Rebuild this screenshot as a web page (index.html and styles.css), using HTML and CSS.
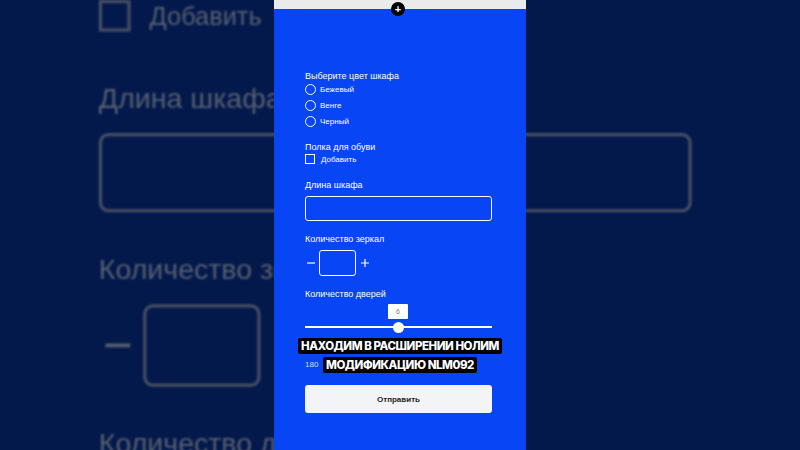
FILE: index.html
```html
<!DOCTYPE html>
<html lang="ru">
<head>
<meta charset="utf-8">
<title>Конфигуратор шкафа</title>
<link rel="stylesheet" href="styles.css">
</head>
<body>
<div class="stage">
  <div class="backdrop" aria-hidden="true">
    <div class="panel">
      <div class="strip"><span class="add">+</span></div>
      <div class="form">
        <div class="label">Выберите цвет шкафа</div>
        <div class="options">
          <div class="option"><span class="radio"></span>Бежевый</div>
          <div class="option"><span class="radio"></span>Венге</div>
          <div class="option"><span class="radio"></span>Черный</div>
        </div>
        <div class="label gap">Полка для обуви</div>
        <div class="check-row"><span class="checkbox"></span>Добавить</div>
        <div class="label gap-l">Длина шкафа</div>
        <div class="input"></div>
        <div class="label gap">Количество зеркал</div>
        <div class="stepper">
          <svg class="sign minus" viewBox="0 0 8 8"><path d="M0 4H8"/></svg>
          <div class="count"></div>
          <svg class="sign plus" viewBox="0 0 8 8"><path d="M0 4H8M4 0V8"/></svg>
        </div>
        <div class="label gap">Количество дверей</div>
        <div class="bubble">6</div>
        <div class="slider"><span class="thumb"></span></div>
        <div class="minval">180</div>
        <div class="submit">Отправить</div>
      </div>
    </div>
  </div>

  <div class="front">
    <div class="panel">
      <div class="strip"><span class="add">+</span></div>
      <div class="form">
        <div class="label">Выберите цвет шкафа</div>
        <div class="options">
          <div class="option"><span class="radio"></span>Бежевый</div>
          <div class="option"><span class="radio"></span>Венге</div>
          <div class="option"><span class="radio"></span>Черный</div>
        </div>
        <div class="label gap">Полка для обуви</div>
        <div class="check-row"><span class="checkbox"></span>Добавить</div>
        <div class="label gap-l">Длина шкафа</div>
        <div class="input"></div>
        <div class="label gap">Количество зеркал</div>
        <div class="stepper">
          <svg class="sign minus" viewBox="0 0 8 8"><path d="M0 4H8"/></svg>
          <div class="count"></div>
          <svg class="sign plus" viewBox="0 0 8 8"><path d="M0 4H8M4 0V8"/></svg>
        </div>
        <div class="label gap">Количество дверей</div>
        <div class="bubble">6</div>
        <div class="slider"><span class="thumb"></span></div>
        <div class="minval">180</div>
        <div class="submit">Отправить</div>
      </div>
    </div>
  </div>

  <div class="caption">
    <span class="cap-line">НАХОДИМ В РАСШИРЕНИИ НОЛИМ</span>
    <span class="cap-line">МОДИФИКАЦИЮ NLM092</span>
  </div>
</div>
</body>
</html>
```

FILE: styles.css
```css
* { box-sizing: border-box; }

html, body {
  margin: 0;
  padding: 0;
  background: #03194b;
}

.stage {
  position: relative;
  width: 800px;
  height: 450px;
  overflow: hidden;
  display: grid;
  background: #03194b;
  font-family: "Liberation Sans", Arial, sans-serif;
}

.backdrop,
.front {
  grid-area: 1 / 1;
  display: flex;
  justify-content: center;
  position: relative;
}

.backdrop { z-index: 0; }
.front { z-index: 1; }

.panel {
  --bg: #0845f5;
  --ink: #ffffff;
  --line: #ffffff;
  --soft: #d6e0ff;
  --btn: #f3f4f6;
  --btn-ink: #1d1f24;
  width: 252px;
  height: 450px;
  background: var(--bg);
  color: var(--ink);
  display: flex;
  flex-direction: column;
}

.backdrop .panel {
  --bg: #03194b;
  --ink: #585f71;
  --line: #474f65;
  --soft: #4f5870;
  --btn: #3a4050;
  --btn-ink: #20242c;
  transform: scale(3.17);
  transform-origin: 50% 50%;
  filter: blur(0.3px);
}

.strip {
  height: 9px;
  flex: none;
  background: #ebebeb;
  display: flex;
  padding-left: 117px;
}

.add {
  width: 14px;
  height: 14px;
  margin-top: 2px;
  border-radius: 50%;
  background: #000;
  color: #fff;
  font-size: 11px;
  line-height: 14px;
  text-align: center;
  font-weight: bold;
}

.form {
  padding: 61px 34px 0 31px;
  display: flex;
  flex-direction: column;
}

.label {
  font-size: 9px;
  line-height: 12px;
  height: 12px;
  white-space: nowrap;
}

.gap { margin-top: 12px; }
.gap-l { margin-top: 14px; }

.options {
  margin-top: -1px;
  display: flex;
  flex-direction: column;
}

.option {
  height: 16px;
  display: flex;
  align-items: center;
  gap: 4px;
  font-size: 8px;
}

.radio {
  width: 11px;
  height: 11px;
  border: 1px solid var(--line);
  border-radius: 50%;
}

.check-row {
  height: 12px;
  display: flex;
  align-items: center;
  gap: 6px;
  font-size: 8px;
}

.checkbox {
  width: 10px;
  height: 10px;
  border: 1px solid var(--line);
}

.input {
  margin-top: 5px;
  height: 25px;
  border: 1px solid var(--line);
  border-radius: 3px;
}

.stepper {
  margin-top: 5px;
  height: 26px;
  display: flex;
  align-items: center;
}

.sign {
  width: 8px;
  height: 8px;
  fill: none;
  stroke: var(--ink);
  stroke-width: 1.2;
}

.minus { margin-left: 2px; margin-right: 4px; }
.plus { margin-left: 5px; }

.count {
  width: 37px;
  height: 26px;
  border: 1px solid var(--line);
  border-radius: 3px;
}

.bubble {
  margin-top: 4px;
  margin-left: 83px;
  width: 20px;
  height: 15px;
  background: #ffffff;
  color: #7b7f88;
  font-size: 7px;
  line-height: 15px;
  text-align: center;
  border-radius: 1px;
}

.backdrop .bubble { background: #4b5165; color: #2c3140; }

.slider {
  position: relative;
  margin-top: 2px;
  height: 12px;
  display: flex;
  align-items: center;
}

.slider::before {
  content: "";
  flex: 1;
  height: 1.5px;
  background: var(--line);
}

.thumb {
  position: absolute;
  left: 88px;
  top: 0.5px;
  width: 11px;
  height: 11px;
  border-radius: 50%;
  background: #ffffff;
}

.backdrop .thumb { background: #5a6174; }

.minval {
  margin-top: 26px;
  font-size: 8px;
  line-height: 12px;
  color: var(--soft);
}

.submit {
  margin-top: 14px;
  height: 28px;
  border-radius: 3px;
  background: var(--btn);
  color: var(--btn-ink);
  font-size: 8px;
  font-weight: bold;
  display: flex;
  align-items: center;
  justify-content: center;
}

.caption {
  position: absolute;
  z-index: 2;
  top: 338px;
  left: 0;
  right: 0;
  display: flex;
  flex-direction: column;
  align-items: center;
  gap: 3px;
  font-family: Inter, sans-serif;
  font-weight: 800;
  font-size: 11.5px;
  color: #fff;
}

.cap-line {
  background: #000;
  padding: 0 3px;
  height: 16px;
  line-height: 16px;
  border-radius: 2px;
  white-space: nowrap;
  letter-spacing: -0.45px;
}
```
